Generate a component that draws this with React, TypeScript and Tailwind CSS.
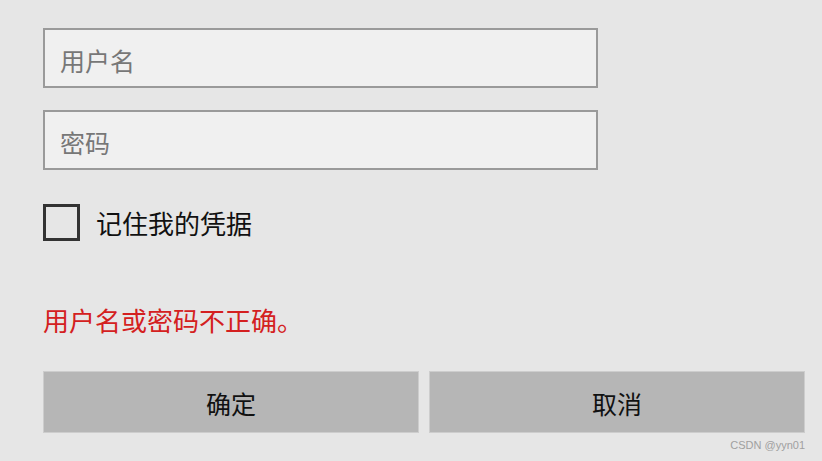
export default function App() {
  const font = { fontFamily: '"Noto Sans CJK SC", "Noto Sans", sans-serif' };
  return (
    <div
      className="relative w-[822px] h-[461px] bg-[#e6e6e6] overflow-hidden pl-[43px] pr-[17px] pt-[28px]"
      style={font}
    >
      {/* username / password */}
      <div className="w-[555px] flex flex-col gap-[22px]">
        <div className="h-[60px] border-2 border-[#9a9a9a] bg-[#f0f0f0] flex items-center pl-[15px] pt-[6px] text-[25px] text-[#777777]">
          用户名
        </div>
        <div className="h-[60px] border-2 border-[#9a9a9a] bg-[#f0f0f0] flex items-center pl-[15px] pt-[6px] text-[25px] text-[#777777]">
          密码
        </div>
      </div>

      {/* remember me */}
      <div className="mt-[34px] flex items-center gap-[16px]">
        <div className="w-[37px] h-[37px] border-[3px] border-[#333333] bg-[#e6e6e6]" />
        <span className="text-[26px] text-[#111111] leading-none">记住我的凭据</span>
      </div>

      {/* error */}
      <div className="mt-[64px] text-[26px] leading-[30px] text-[#d42020]">用户名或密码不正确。</div>

      {/* buttons */}
      <div className="mt-[36px] flex gap-[10px]">
        <button className="flex-1 h-[62px] bg-[#b6b6b6] border border-[#cdcdcd] text-[25px] text-[#111111] pt-[4px]">
          确定
        </button>
        <button className="flex-1 h-[62px] bg-[#b6b6b6] border border-[#cdcdcd] text-[25px] text-[#111111] pt-[4px]">
          取消
        </button>
      </div>

      <div
        className="absolute right-[17px] bottom-[8px] text-[11px] text-[#a0a0a0]"
        style={{ fontFamily: '"Liberation Sans", Arial, sans-serif' }}
      >
        CSDN @yyn01
      </div>
    </div>
  );
}
